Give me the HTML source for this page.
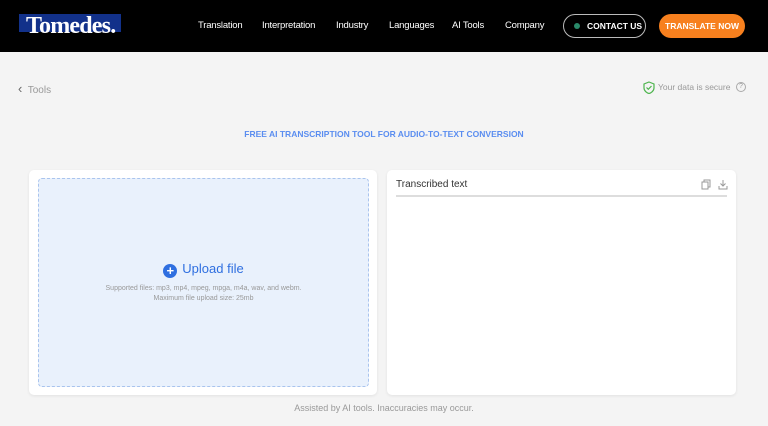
<!DOCTYPE html>
<html><head><style>
*{margin:0;padding:0;box-sizing:border-box}
body{width:768px;height:426px;background:#f4f4f4;font-family:"Liberation Sans",sans-serif;position:relative;overflow:hidden}
.hdr{position:absolute;left:0;top:0;width:768px;height:52px;background:#000}
.logobg{position:absolute;left:19px;top:14px;width:102px;height:18px;background:#12318a}
.logo{position:absolute;left:26px;top:13px;font-family:"Liberation Serif",serif;font-weight:bold;font-size:24px;color:#fff;letter-spacing:-0.8px}
.nav{position:absolute;top:20px;font-size:9.5px;color:#fff;white-space:nowrap;letter-spacing:-0.2px}
.contact{position:absolute;left:563px;top:14px;width:83px;height:24px;border:1px solid #bbb;border-radius:12px;color:#fff;font-size:8.5px;font-weight:bold;line-height:22px;padding-left:23px;white-space:nowrap}
.contact i{position:absolute;left:10px;top:8px;width:6px;height:6px;border-radius:50%;background:#2a8a6a}
.tn{position:absolute;left:659px;top:14px;width:86px;height:24px;background:#f7801e;border-radius:12px;color:#fff;font-size:8.5px;font-weight:bold;line-height:24px;text-align:center;white-space:nowrap}
.t{position:absolute;font-size:10px;color:#999;white-space:nowrap}
.title{position:absolute;left:0;width:768px;top:129px;text-align:center;font-size:8.5px;font-weight:bold;color:#5a8df0}
.card{position:absolute;top:170px;height:225px;background:#fff;border-radius:5px;box-shadow:0 1px 3px rgba(0,0,0,.08)}
.up{position:absolute;left:38px;top:178px;width:331px;height:209px;background:#e9f1fc;border:1px dashed #a9c4ee;border-radius:4px;text-align:center}
</style></head><body>
<div class="hdr">
<div class="logobg"></div><div class="logo">Tomedes.</div>
<div class="nav" style="left:198px">Translation</div>
<div class="nav" style="left:262px">Interpretation</div>
<div class="nav" style="left:336px">Industry</div>
<div class="nav" style="left:389px">Languages</div>
<div class="nav" style="left:452px">AI Tools</div>
<div class="nav" style="left:505px">Company</div>
<div class="contact"><i></i>CONTACT US</div>
<div class="tn">TRANSLATE NOW</div>
</div>
<div class="t" style="left:18px;top:81px"><span style="color:#666;font-size:13px">‹</span>&nbsp; Tools</div>
<svg style="position:absolute;left:643px;top:81px" width="12" height="13" viewBox="0 0 12 13"><path d="M6 1L11 3V7C11 10 8 12 6 12.5C4 12 1 10 1 7V3Z" fill="none" stroke="#4cb44c" stroke-width="1.2"/><path d="M3.5 6.5L5.3 8.3L8.5 5" fill="none" stroke="#4cb44c" stroke-width="1.2"/></svg>
<div class="t" style="left:658px;top:82px;font-size:8.5px">Your data is secure</div>
<div style="position:absolute;left:736px;top:82px;width:10px;height:10px;border:1px solid #aaa;border-radius:50%;font-size:7px;color:#999;text-align:center;line-height:8px">?</div>
<div class="title">FREE AI TRANSCRIPTION TOOL FOR AUDIO-TO-TEXT CONVERSION</div>
<div class="card" style="left:29px;width:348px"></div>
<div class="up">
<div style="margin-top:82px;font-size:13px;color:#2f6fe0"><span style="display:inline-block;width:14px;height:14px;border-radius:50%;background:#2f6fe0;color:#fff;font-size:13px;line-height:14px;font-weight:bold;vertical-align:-2px;margin-right:5px">+</span>Upload file</div>
<div style="margin-top:6px;font-size:7px;color:#999;line-height:10px">Supported files: mp3, mp4, mpeg, mpga, m4a, wav, and webm.<br>Maximum file upload size: 25mb</div>
</div>
<div class="card" style="left:387px;width:349px"></div>
<div style="position:absolute;left:396px;top:179px;font-size:10px;color:#333">Transcribed text</div>
<div style="position:absolute;left:396px;top:195px;width:331px;height:2px;background:#ddd"></div>
<svg style="position:absolute;left:701px;top:179px" width="28" height="11" viewBox="0 0 28 11"><rect x="1" y="3" width="6" height="7" fill="none" stroke="#999"/><path d="M3 3V1H9V8H7" fill="none" stroke="#999"/><path d="M22 1V7M19.5 4.5L22 7L24.5 4.5M18 7V10H26V7" fill="none" stroke="#999"/></svg>
<div style="position:absolute;left:0;width:768px;top:403px;text-align:center;font-size:9px;color:#999">Assisted by AI tools. Inaccuracies may occur.</div>
</body></html>
